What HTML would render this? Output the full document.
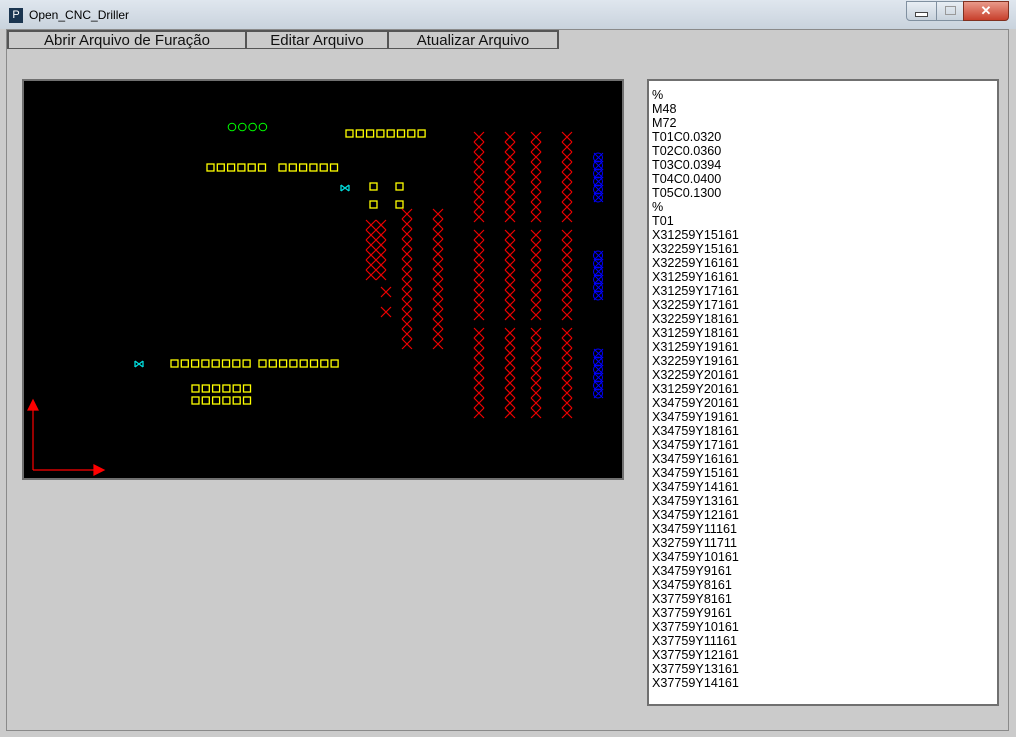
<!DOCTYPE html><html><head><style>
body{margin:0;width:1016px;height:737px;overflow:hidden;background:#cbcbcb;font-family:"Liberation Sans",Arial,sans-serif;position:relative}
.tb{position:absolute;left:0;top:0;width:1016px;height:29px;background:linear-gradient(#dfe6ee,#c9d3dd)}
.frame{position:absolute;left:6px;top:29px;width:1001px;height:700px;background:#cbcbcb;border:1px solid #8a8a8a}
.btn{position:absolute;top:30px;height:16px;border:1px solid #555;border-width:2px 2px 1px 2px;background:#cbcbcb;font-size:15px;line-height:17px;text-align:center;color:#111}
.txt{position:absolute;left:647px;top:79px;width:352px;height:627px;border:2px solid #707070;background:#fff;font-size:12.6px;line-height:14px;padding:7px 0 0 3px;box-sizing:border-box;color:#000;white-space:pre}
</style></head><body>
<div class="tb"></div>
<div style="position:absolute;left:9px;top:8px;width:14px;height:15px;background:#1b3550;color:#fff;font-size:11px;line-height:15px;text-align:center">P</div>
<div style="position:absolute;left:29px;top:8px;font-size:12px">Open_CNC_Driller</div>
<div style="position:absolute;left:906px;top:1px;width:29px;height:18px;background:linear-gradient(#e8eef4,#c8d2dc);border:1px solid #8090a0;border-radius:0 0 0 4px"><div style="margin:10px auto 0;width:11px;height:3px;background:#fff;border:1px solid #444"></div></div>
<div style="position:absolute;left:936px;top:1px;width:26px;height:18px;background:linear-gradient(#e8eef4,#c8d2dc);border:1px solid #8090a0"><div style="margin:4px auto 0;width:9px;height:7px;border:1px solid #999"></div></div>
<div style="position:absolute;left:963px;top:1px;width:44px;height:18px;background:linear-gradient(#e99a8a,#c8402c);border:1px solid #803020;border-radius:0 0 4px 0;color:#fff;font-weight:bold;font-size:13px;text-align:center;line-height:18px">✕</div>
<div class="frame"></div>
<div class="btn" style="left:7px;width:236px">Abrir Arquivo de Furação</div>
<div class="btn" style="left:245px;width:140px">Editar Arquivo</div>
<div class="btn" style="left:387px;width:168px">Atualizar Arquivo</div>
<svg style="position:absolute;left:0;top:0" width="1016" height="737" id="s">
<rect x="23" y="80" width="600" height="399" fill="#000" stroke="#707070" stroke-width="2"/>
<g stroke="#f00" stroke-width="1.2" fill="#f00">
<line x1="33" y1="406" x2="33" y2="470"/><line x1="33" y1="470" x2="97" y2="470"/>
<polygon points="33,400 28,410 38,410"/><polygon points="104,470 94,465 94,475"/>
</g>
<g id="g"></g>
</svg>
<div class="txt">%
M48
M72
T01C0.0320
T02C0.0360
T03C0.0394
T04C0.0400
T05C0.1300
%
T01
X31259Y15161
X32259Y15161
X32259Y16161
X31259Y16161
X31259Y17161
X32259Y17161
X32259Y18161
X31259Y18161
X31259Y19161
X32259Y19161
X32259Y20161
X31259Y20161
X34759Y20161
X34759Y19161
X34759Y18161
X34759Y17161
X34759Y16161
X34759Y15161
X34759Y14161
X34759Y13161
X34759Y12161
X34759Y11161
X32759Y11711
X34759Y10161
X34759Y9161
X34759Y8161
X37759Y8161
X37759Y9161
X37759Y10161
X37759Y11161
X37759Y12161
X37759Y13161
X37759Y14161</div>
<script>
var g=document.getElementById('g'),h='';
function sq(x,y){h+='<rect x="'+x+'" y="'+y+'" width="7" height="7" fill="none" stroke="#ff0" stroke-width="1.3"/>';}
function row(x,y,n){for(var i=0;i<n;i++)sq(x+i*10.3,y);}
row(346,130,8);row(207,164,6);row(279,164,6);sq(370,183);sq(396,183);sq(370,201);sq(396,201);
row(171,360,8);row(259,360,8);row(192,385,6);row(192,397,6);
for(var i=0;i<4;i++)h+='<circle cx="'+(232+i*10.3)+'" cy="127" r="3.8" fill="none" stroke="#0f0"/>';
function X(cx,y){h+='<path d="M'+(cx-5)+' '+y+'L'+(cx+5)+' '+(y+10)+'M'+(cx+5)+' '+y+'L'+(cx-5)+' '+(y+10)+'" stroke="#e00" stroke-width="1.2"/>';}
function col(cx,y1,y2){for(var y=y1;y+10<=y2+1;y+=10)X(cx,y);}
[479,510,536,567].forEach(function(c){col(c,132,222);col(c,230,322);col(c,328,420);});
col(371,220,280);col(381,220,280);X(386,287);X(386,307);col(407,209,353);col(438,209,353);
function B(y1,y2){for(var y=y1;y+9<=y2+1;y+=8){h+='<circle cx="598" cy="'+(y+4.5)+'" r="4.5" fill="none" stroke="#00f"/><path d="M594 '+y+'L603 '+(y+9)+'M603 '+y+'L594 '+(y+9)+'" stroke="#00f"/>';}}
B(153,203);B(251,301);B(349,399);
function C(x,y){h+='<path d="M'+(x-4)+' '+(y-3)+'L'+(x+4)+' '+(y+3)+'M'+(x+4)+' '+(y-3)+'L'+(x-4)+' '+(y+3)+'M'+(x-4)+' '+(y-3)+'V'+(y+3)+'M'+(x+4)+' '+(y-3)+'V'+(y+3)+'" stroke="#0dd" stroke-width="1.3" fill="none"/>';}
C(345,188);C(139,364);
g.innerHTML=h;
</script>
</body></html>
